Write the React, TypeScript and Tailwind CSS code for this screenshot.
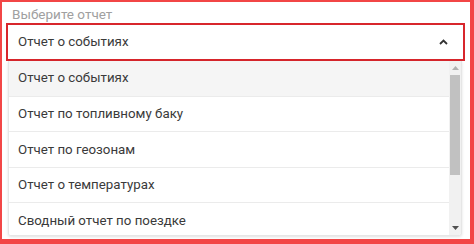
const items = [
  'Отчет о событиях',
  'Отчет по топливному баку',
  'Отчет по геозонам',
  'Отчет о температурах',
  'Сводный отчет по поездке',
];

const App = () => {
  return (
    <div
      className="w-[474px] h-[244px] bg-white border-t-2 border-l-2 border-r-4 border-b-[5px] border-[#f24646] pl-[4px] pr-[5px] pt-[4px] overflow-hidden"
      style={{ fontFamily: 'Roboto, "Liberation Sans", sans-serif' }}
    >
      {/* Label */}
      <div className="ml-[6px] h-[16px] text-[13.5px] leading-[16px] text-[#a0a0a0]">
        Выберите отчет
      </div>

      {/* Select */}
      <div className="mt-[1px] h-[38px] border-2 border-[#d8262c] flex items-center justify-between pl-[10px] pr-[15px]">
        <span className="text-[13.3px] text-[#3a3a3a]">Отчет о событиях</span>
        <svg width="9" height="6" viewBox="0 0 9 6" fill="none">
          <path d="M1 5 L4.5 1.5 L8 5" stroke="#333" strokeWidth="1.8" />
        </svg>
      </div>

      {/* Dropdown list */}
      <div className="ml-[2px] mr-[3px] h-[175px] flex border-x border-b border-[#e6e6e6] rounded-b-[3px] shadow-[0_1px_3px_rgba(0,0,0,0.12)] overflow-hidden">
        <div className="flex-1 overflow-hidden">
          {items.map((item, i) => (
            <div
              key={item}
              className={`h-[35.6px] shrink-0 flex items-center pl-[9px] border-b border-[#ebebeb] text-[13.3px] text-[#3a3a3a] ${
                i === 0 ? 'bg-[#f5f5f5]' : 'bg-white'
              }`}
            >
              {item}
            </div>
          ))}
        </div>

        {/* Scrollbar */}
        <div className="w-[12px] bg-[#f1f1f1] flex flex-col">
          <div className="h-[14px] flex items-center justify-center">
            <svg width="7" height="4" viewBox="0 0 7 4">
              <path d="M0 4 L3.5 0 L7 4 Z" fill="#b0b0b0" />
            </svg>
          </div>
          <div className="h-[100px] mx-[1px] bg-[#c1c1c1]" />
          <div className="flex-1" />
          <div className="h-[14px] flex items-center justify-center">
            <svg width="7" height="4" viewBox="0 0 7 4">
              <path d="M0 0 L3.5 4 L7 0 Z" fill="#505050" />
            </svg>
          </div>
        </div>
      </div>
    </div>
  );
};

export default App;
